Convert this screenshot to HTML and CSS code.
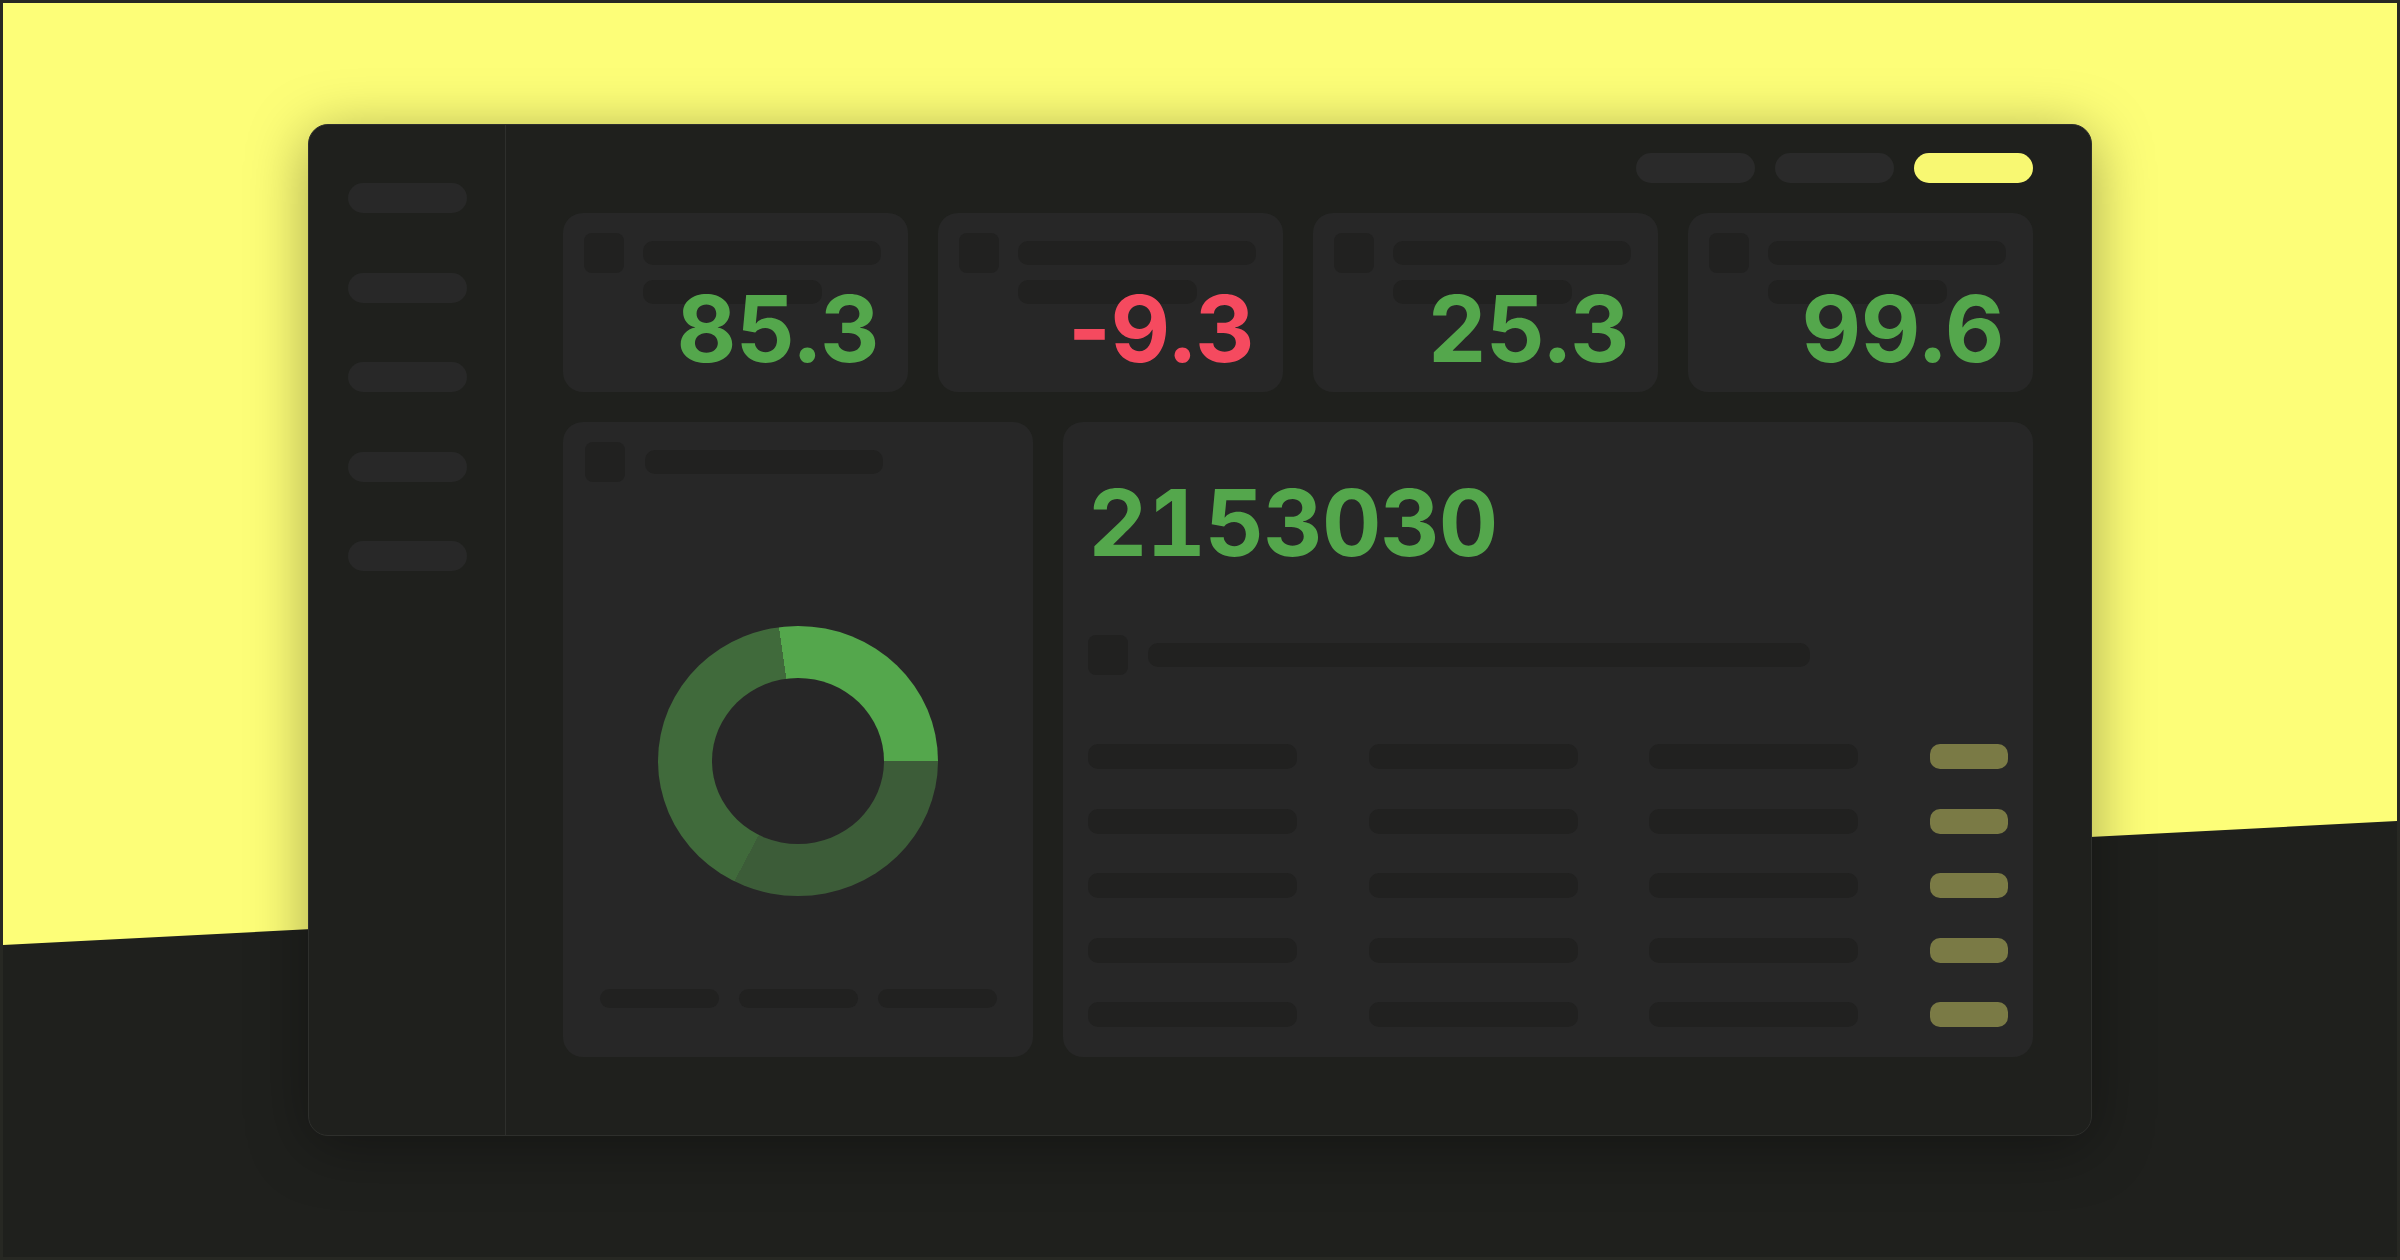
FILE: index.html
```html
<!DOCTYPE html>
<html lang="en">
<head>
    <meta charset="UTF-8">
    <meta name="viewport" content="width=device-width, initial-scale=1.0">
    <title>Dashboard Preview</title>
    <link rel="stylesheet" href="styles.css">
</head>
<body>

    <div class="window">
        <aside class="sidebar">
            <span class="nav-pill"></span>
            <span class="nav-pill"></span>
            <span class="nav-pill"></span>
            <span class="nav-pill"></span>
            <span class="nav-pill"></span>
        </aside>

        <main class="main">
            <header class="topbar">
                <span class="top-btn"></span>
                <span class="top-btn"></span>
                <span class="top-btn accent"></span>
            </header>

            <section class="stats">
                <div class="stat-card">
                    <div class="card-head">
                        <span class="icon-box"></span>
                        <div class="head-lines">
                            <span class="line long"></span>
                            <span class="line short"></span>
                        </div>
                    </div>
                    <div class="stat-value up">85.3</div>
                </div>
                <div class="stat-card">
                    <div class="card-head">
                        <span class="icon-box"></span>
                        <div class="head-lines">
                            <span class="line long"></span>
                            <span class="line short"></span>
                        </div>
                    </div>
                    <div class="stat-value down">-9.3</div>
                </div>
                <div class="stat-card">
                    <div class="card-head">
                        <span class="icon-box"></span>
                        <div class="head-lines">
                            <span class="line long"></span>
                            <span class="line short"></span>
                        </div>
                    </div>
                    <div class="stat-value up">25.3</div>
                </div>
                <div class="stat-card">
                    <div class="card-head">
                        <span class="icon-box"></span>
                        <div class="head-lines">
                            <span class="line long"></span>
                            <span class="line short"></span>
                        </div>
                    </div>
                    <div class="stat-value up">99.6</div>
                </div>
            </section>

            <section class="panels">
                <div class="panel chart-panel">
                    <div class="panel-head">
                        <span class="icon-box"></span>
                        <span class="line long"></span>
                    </div>
                    <div class="donut"></div>
                    <div class="legend">
                        <span class="legend-item"></span>
                        <span class="legend-item"></span>
                        <span class="legend-item"></span>
                    </div>
                </div>

                <div class="panel table-panel">
                    <div class="total">2153030</div>
                    <div class="panel-head">
                        <span class="icon-box"></span>
                        <span class="line wide"></span>
                    </div>
                    <div class="rows">
                        <div class="row"><span class="cell"></span><span class="cell"></span><span class="cell"></span><span class="badge"></span></div>
                        <div class="row"><span class="cell"></span><span class="cell"></span><span class="cell"></span><span class="badge"></span></div>
                        <div class="row"><span class="cell"></span><span class="cell"></span><span class="cell"></span><span class="badge"></span></div>
                        <div class="row"><span class="cell"></span><span class="cell"></span><span class="cell"></span><span class="badge"></span></div>
                        <div class="row"><span class="cell"></span><span class="cell"></span><span class="cell"></span><span class="badge"></span></div>
                    </div>
                </div>
            </section>
        </main>
    </div>

</body>
</html>
```

FILE: styles.css
```css
* {
    box-sizing: border-box;
}
body {
    font-family: Inter, "Noto Sans", sans-serif;
    margin: 0;
    height: 100vh;
    display: flex;
    justify-content: center;
    align-items: center;
    position: relative;
    background-color: #1f201d;
    border: 3px solid #272823;
    overflow: hidden;
}
/* yellow backdrop with slanted lower edge */
body::before {
    content: "";
    position: absolute;
    inset: 0;
    background-color: #fdfe78;
    clip-path: polygon(0 0, 100% 0, 100% 818px, 0 942px);
}
.window {
    position: relative;
    z-index: 1;
    width: 1784px;
    height: 1012px;
    display: flex;
    background-color: #1f201d;
    border: 1px solid #2e2f2c;
    border-radius: 20px;
    box-shadow: 0 10px 60px rgba(0, 0, 0, 0.35);
    overflow: hidden;
}
.sidebar {
    width: 197px;
    flex-shrink: 0;
    border-right: 1px solid #2e2f2c;
    padding: 58px 0 0 39px;
    display: flex;
    flex-direction: column;
    gap: 59.5px;
}
.nav-pill {
    width: 119px;
    height: 30px;
    border-radius: 15px;
    background-color: #282828;
}
.main {
    flex: 1;
    padding: 28px 58px 0 57px;
}
.topbar {
    display: flex;
    justify-content: flex-end;
    gap: 20px;
}
.top-btn {
    width: 119px;
    height: 30px;
    border-radius: 15px;
    background-color: #2a2a2a;
}
.top-btn.accent {
    background-color: #f8f872;
}
.stats {
    margin-top: 30px;
    display: grid;
    grid-template-columns: repeat(4, 1fr);
    gap: 30px;
}
.stat-card {
    position: relative;
    height: 179px;
    padding: 20px 21px;
    border-radius: 20px;
    background-color: #272727;
}
.card-head {
    display: flex;
    gap: 19px;
}
.icon-box {
    width: 40px;
    height: 40px;
    flex-shrink: 0;
    border-radius: 8px;
    background-color: #212120;
}
.head-lines {
    display: flex;
    flex-direction: column;
    gap: 15px;
    padding-top: 8px;
}
.line {
    display: block;
    height: 24px;
    border-radius: 10px;
    background-color: #212120;
}
.line.long {
    width: 238px;
}
.line.short {
    width: 179px;
}
.line.wide {
    width: 662px;
}
.stat-value,
.total {
    font-size: 92px;
    font-weight: 700;
    line-height: 1;
}
.stat-value {
    position: absolute;
    right: 29px;
    bottom: 17px;
    letter-spacing: -0.5px;
}
.up {
    color: #54a74c;
}
.down {
    color: #f54a5f;
}
.panels {
    margin-top: 30px;
    height: 635px;
    display: grid;
    grid-template-columns: 470px 1fr;
    gap: 30px;
}
.panel {
    border-radius: 20px;
    background-color: #272727;
}
.panel-head {
    display: flex;
    align-items: center;
    gap: 20px;
}
.chart-panel {
    padding: 20px 22px;
    display: flex;
    flex-direction: column;
}
.donut {
    position: relative;
    align-self: center;
    width: 280px;
    height: 270px;
    margin-top: 144px;
    border-radius: 50%;
    background: conic-gradient(from -8.1deg, #54a74c 0deg 98.1deg, #3c5c38 98.1deg 216deg, #406a3b 216deg 360deg);
}
.donut::after {
    content: "";
    position: absolute;
    left: 54px;
    top: 52px;
    width: 172px;
    height: 166px;
    border-radius: 50%;
    background-color: #272727;
}
.legend {
    margin-top: 93px;
    display: flex;
    justify-content: center;
    gap: 20px;
}
.legend-item {
    width: 119px;
    height: 19px;
    border-radius: 10px;
    background-color: #212120;
}
.table-panel {
    padding: 0 25px;
}
.total {
    margin-top: 55px;
    color: #54a74c;
    font-variant-numeric: tabular-nums;
    letter-spacing: -1px;
}
.table-panel .panel-head {
    margin-top: 66px;
}
.rows {
    margin-top: 69px;
    display: flex;
    flex-direction: column;
    gap: 39.5px;
}
.row {
    display: flex;
    justify-content: space-between;
}
.cell {
    width: 209px;
    height: 25px;
    border-radius: 10px;
    background-color: #212120;
}
.badge {
    width: 78px;
    height: 25px;
    border-radius: 10px;
    background-color: #7a7a45;
}
```
